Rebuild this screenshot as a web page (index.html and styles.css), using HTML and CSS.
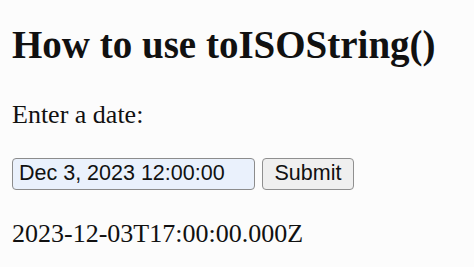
FILE: index.html
```html
<!DOCTYPE html>
<html lang="en">
  <head>
    <meta charset="UTF-8" />
    <meta name="viewport" content="width=device-width, initial-scale=1.0" />
    <title>How to use toISOString()</title>
    <link rel="stylesheet" href="styles.css">
  </head>
  <body>
    <h1>How to use toISOString()</h1>
    <p class="label">Enter a date:</p>
    <form class="date-form">
      <input type="text" class="date-input" value="Dec 3, 2023 12:00:00" />
      <button type="submit" class="submit-button">Submit</button>
    </form>
    <p class="result">2023-12-03T17:00:00.000Z</p>
  </body>
</html>
```

FILE: styles.css
```css
* {
  box-sizing: border-box;
}

body {
  margin: 0;
  padding: 0 12px;
  background: #fcfcfc;
  color: #111;
  font-family: "Liberation Serif", "Times New Roman", serif;
  font-size: 26px;
  line-height: 1.15;
}

h1 {
  font-size: 39px;
  font-weight: bold;
  margin: 23px 0 32px;
}

.label {
  margin: 0 0 28px;
}

.date-form {
  display: flex;
  gap: 7px;
  margin-bottom: 29px;
}

.date-input {
  width: 243px;
  height: 32px;
  padding: 0 6px;
  font-family: "Liberation Sans", Arial, sans-serif;
  font-size: 21.5px;
  color: #111;
  background: #eaf1fc;
  border: 1px solid #8c8c8c;
  border-radius: 4px;
}

.submit-button {
  width: 92px;
  height: 32px;
  padding: 0;
  font-family: "Liberation Sans", Arial, sans-serif;
  font-size: 21.5px;
  color: #111;
  background: #efefef;
  border: 1px solid #8f8f8f;
  border-radius: 4px;
}

.result {
  margin: 0;
}
```
